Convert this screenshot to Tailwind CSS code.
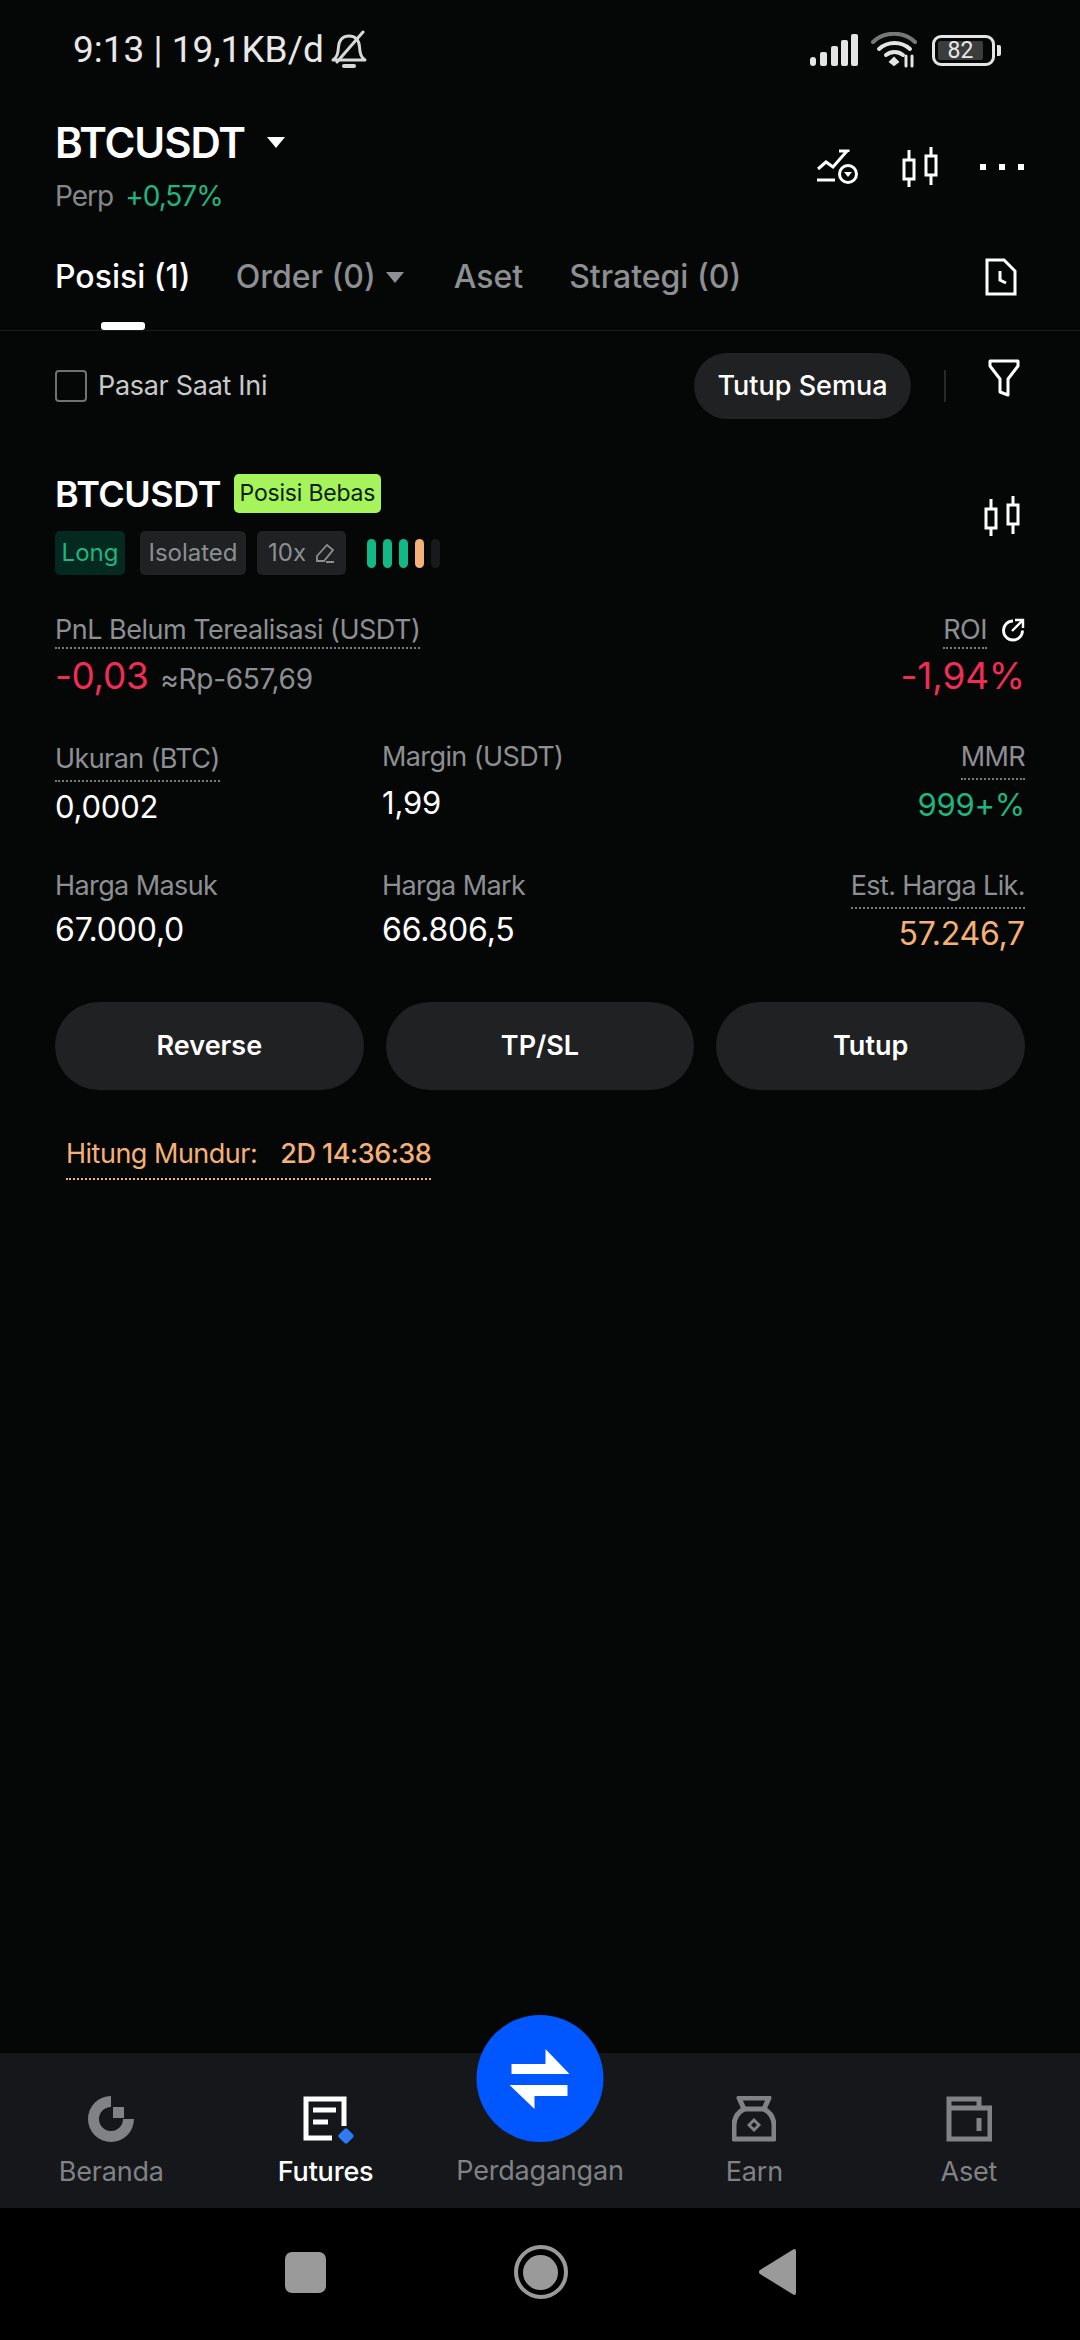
<!DOCTYPE html>
<html lang="en">
<head>
    <meta charset="UTF-8">
    <meta name="viewport" content="width=device-width, initial-scale=1.0">
    <title>Futures</title>
    <script src="https://cdn.jsdelivr.net/npm/@tailwindcss/browser@4"></script>
</head>
<body class="bg-[#050707]">
<div class="w-[1080px] h-[2340px] flex flex-col bg-[#050707] text-white overflow-hidden font-[family-name:Inter,sans-serif]">

    <!-- status bar -->
    <div class="h-[100px] shrink-0 flex items-center justify-between pl-[73px] pr-[79px]">
        <div class="flex items-center gap-[6px] text-[37px] text-[#e8e8e8] font-[family-name:Roboto,sans-serif]">
            <span>9:13 | 19,1KB/d</span>
            <svg class="w-[38px] h-[40px]" viewBox="0 0 38 40" fill="none" stroke="#d8d8d8" stroke-width="3">
                <path d="M3 30c4-3 5-6 5.500-13C9 10 13 6 19 6c6 0 10 4 10.500 11 .5 7 1.500 10 5.500 13z" stroke-linejoin="round"/>
                <path d="M14 36h10" stroke-linecap="round" stroke-width="4"/>
                <path d="M33 2L7 32" stroke-linecap="round"/>
            </svg>
        </div>
        <div class="flex items-center gap-[13px]">
            <svg class="w-[48px] h-[32px]" viewBox="0 0 48 32" fill="#e4e4e4">
                <rect x="0" y="23" width="6" height="9" rx="3"/>
                <rect x="10" y="18" width="7" height="14" rx="2"/>
                <rect x="21" y="12" width="7" height="20" rx="2"/>
                <rect x="31" y="6" width="7" height="26" rx="2"/>
                <rect x="41" y="0" width="7" height="32" rx="2"/>
            </svg>
            <svg class="w-[48px] h-[36px]" viewBox="0 0 48 36" fill="none" stroke-linecap="round">
                <path d="M2 10C13-1 33-1 44 10" stroke="#777" stroke-width="4"/>
                <path d="M8 17c9-8 22-8 31 0" stroke="#e4e4e4" stroke-width="4"/>
                <path d="M15 23c5-4 12-4 17 0" stroke="#e4e4e4" stroke-width="4"/>
                <path d="M19 30l4-4 4 4-4 3z" fill="#e4e4e4" stroke="#e4e4e4" stroke-width="2"/>
                <path d="M35 24v10M41 24v10" stroke="#e4e4e4" stroke-width="3"/>
            </svg>
            <div class="flex items-center gap-[2px]">
                <div class="w-[63px] h-[31px] rounded-[9px] border-[3px] border-[#e4e4e4] p-[3px] flex">
                    <div class="w-[45px] bg-[#3c3c3c] rounded-[2px] flex items-center justify-center text-[23px] leading-none text-[#e8e8e8] font-[family-name:Roboto,sans-serif]">82</div>
                </div>
                <div class="w-[4px] h-[11px] rounded-r-[2px] bg-[#e4e4e4]"></div>
            </div>
        </div>
    </div>

    <!-- symbol header -->
    <div class="h-[125px] shrink-0 flex items-start justify-between pl-[55px] pr-[56px]">
        <div>
            <div class="flex items-center h-[84px]">
                <span class="text-[42px] font-semibold tracking-[-1.1px]">BTCUSDT</span>
                <span class="ml-[22px] w-0 h-0 border-x-[9px] border-x-transparent border-t-[11px] border-t-white"></span>
            </div>
            <div class="flex items-center gap-[12px] -mt-[6px] text-[28px] leading-[36px] tracking-[-1px]">
                <span class="text-[#85878a]">Perp</span>
                <span class="text-[#1fb57f]">+0,57%</span>
            </div>
        </div>
        <div class="flex items-center h-[86px] mt-[24px]">
            <svg class="w-[42px] h-[36px]" viewBox="0 0 42 36" fill="none" stroke="white" stroke-width="3">
                <path d="M1 20l8-7 7 5L30 2M22 2h9v1"/>
                <path d="M0 31h18"/>
                <circle cx="31" cy="25" r="8.500"/>
                <path d="M27 23h8l-4 5z" fill="white" stroke="none"/>
            </svg>
            <svg class="ml-[43px] w-[36px] h-[40px]" viewBox="0 0 36 40" fill="none" stroke="white" stroke-width="3">
                <rect x="2" y="13" width="10" height="19"/>
                <path d="M7 3v10M7 32v8"/>
                <rect x="24" y="9" width="10" height="19"/>
                <path d="M29 0v9M29 28v10"/>
            </svg>
            <div class="ml-[42px] flex gap-[13px]">
                <div class="w-[6px] h-[6px] bg-white"></div>
                <div class="w-[6px] h-[6px] bg-white"></div>
                <div class="w-[6px] h-[6px] bg-white"></div>
            </div>
        </div>
    </div>

    <!-- tabs -->
    <div class="h-[106px] shrink-0 border-b border-[#1b1d1f] flex items-start pl-[55px] pr-[63px] text-[32px] text-[#8d8f92] font-medium">
        <div class="relative h-[105px] pt-[30px] leading-[44px] text-white">
            Posisi (1)
            <div class="absolute left-[46px] bottom-0 w-[44px] h-[8px] rounded-[3px] bg-white"></div>
        </div>
        <div class="ml-[45px] pt-[30px] leading-[44px] flex items-center gap-[10px]">
            <span>Order (0)</span>
            <span class="w-0 h-0 border-x-[9px] border-x-transparent border-t-[11px] border-t-[#8d8f92]"></span>
        </div>
        <div class="ml-[50px] pt-[30px] leading-[44px]">Aset</div>
        <div class="ml-[46px] pt-[30px] leading-[44px]">Strategi (0)</div>
        <svg class="ml-auto mt-[33px] w-[32px] h-[38px]" viewBox="0 0 32 38" fill="none" stroke="white" stroke-width="3">
            <path d="M2 2h17l11 11v23H2z"/>
            <path d="M15 13v9l6 3"/>
        </svg>
    </div>

    <!-- filter row -->
    <div class="h-[110px] shrink-0 flex items-center justify-between pl-[55px] pr-[60px]">
        <div class="flex items-center gap-[11px]">
            <div class="w-[32px] h-[32px] border-2 border-[#6f7174] rounded-[4px]"></div>
            <span class="text-[27px] tracking-[-0.3px] text-[#c8c9cb]">Pasar Saat Ini</span>
        </div>
        <div class="flex items-center">
            <div class="h-[66px] w-[217px] rounded-full bg-[#1f2122] flex items-center justify-center text-[27px] font-medium">Tutup Semua</div>
            <div class="ml-[33px] w-[2px] h-[32px] bg-[#26282a]"></div>
            <svg class="ml-[42px] -mt-[16px] w-[32px] h-[38px]" viewBox="0 0 32 38" fill="none" stroke="white" stroke-width="3" stroke-linejoin="round">
                <path d="M2 2h28v5L20 20v16l-8-3V20L2 7z"/>
            </svg>
        </div>
    </div>

    <!-- position card -->
    <div class="px-[55px] pt-[33px]">
        <div class="flex justify-between items-center">
            <div>
                <div class="flex items-center gap-[13px] h-[39px]">
                    <span class="text-[36px] font-semibold tracking-[-0.5px]">BTCUSDT</span>
                    <span class="h-[39px] w-[147px] rounded-[5px] bg-[#a6f45c] text-[#0c1f08] text-[23px] tracking-[-0.2px] flex items-center justify-center">Posisi Bebas</span>
                </div>
                <div class="flex items-center mt-[18px] h-[44px] text-[24px]">
                    <span class="h-[44px] w-[70px] rounded-[5px] bg-[#04291f] text-[#1fb57f] flex items-center justify-center">Long</span>
                    <span class="ml-[15px] h-[44px] w-[106px] rounded-[5px] bg-[#1f2122] text-[#8d8f92] flex items-center justify-center">Isolated</span>
                    <span class="ml-[11px] h-[44px] w-[89px] rounded-[5px] bg-[#1f2122] text-[#8d8f92] flex items-center justify-center gap-[9px]">
                        10x
                        <svg class="w-[20px] h-[20px]" viewBox="0 0 20 20" fill="none" stroke="#8d8f92" stroke-width="1.800"><path d="M2 13L12 2l6 5-9 11H2zM11 19h8"/></svg>
                    </span>
                    <div class="ml-[21px] flex gap-[7px]">
                        <div class="w-[9px] h-[29px] rounded-full bg-[#12b886]"></div>
                        <div class="w-[9px] h-[29px] rounded-full bg-[#12b886]"></div>
                        <div class="w-[9px] h-[29px] rounded-full bg-[#12b886]"></div>
                        <div class="w-[9px] h-[29px] rounded-full bg-[#f5b078]"></div>
                        <div class="w-[9px] h-[29px] rounded-full bg-[#17191b]"></div>
                    </div>
                </div>
            </div>
            <svg class="w-[36px] h-[40px] mr-[5px] mb-[18px]" viewBox="0 0 36 40" fill="none" stroke="white" stroke-width="3">
                <rect x="2" y="13" width="10" height="19"/>
                <path d="M7 3v10M7 32v8"/>
                <rect x="24" y="9" width="10" height="19"/>
                <path d="M29 0v9M29 28v10"/>
            </svg>
        </div>

        <!-- pnl -->
        <div class="flex justify-between mt-[38px]">
            <div>
                <div class="inline-block text-[27px] leading-[34px] tracking-[-0.5px] text-[#8d8f92] border-b-2 border-dotted border-[#77797c]">PnL Belum Terealisasi (USDT)</div>
                <div class="flex items-baseline gap-[12px] h-[46px] leading-[46px] mt-[4px]">
                    <span class="text-[37px] tracking-[-0.4px] text-[#f02d55]">-0,03</span>
                    <span class="text-[28px] tracking-[-0.3px] text-[#8d8f92]">≈Rp-657,69</span>
                </div>
            </div>
            <div class="flex flex-col items-end">
                <div class="flex items-start gap-[14px]">
                    <span class="text-[27px] leading-[34px] tracking-[-0.5px] text-[#8d8f92] border-b-2 border-dotted border-[#77797c]">ROI</span>
                    <svg class="w-[24px] h-[24px] mt-[5px]" viewBox="0 0 24 24" fill="none" stroke="white" stroke-width="2.800">
                        <path d="M12 3a9.500 9.500 0 1 0 9.500 9.500"/>
                        <path d="M11 13L21 3M14 2h8v8" stroke-width="2.400"/>
                    </svg>
                </div>
                <div class="text-[37px] h-[46px] leading-[46px] mt-[4px] tracking-[-0.2px] text-[#f02d55]">-1,94%</div>
            </div>
        </div>

        <!-- stats -->
        <div class="grid grid-cols-[327px_1fr_auto] mt-[40px] text-[27px] tracking-[-0.6px]">
            <div>
                <div class="inline-block leading-[36px] pb-[3px] text-[#8d8f92] border-b-2 border-dotted border-[#77797c]">Ukuran (BTC)</div>
                <div class="text-[31px] tracking-[-0.2px] leading-[40px] mt-[5px]">0,0002</div>
            </div>
            <div>
                <div class="leading-[36px] text-[#8d8f92]">Margin (USDT)</div>
                <div class="text-[31px] tracking-[-0.2px] leading-[40px] mt-[8px]">1,99</div>
            </div>
            <div class="flex flex-col items-end">
                <div class="leading-[36px] pb-[3px] text-[#8d8f92] border-b-2 border-dotted border-[#77797c]">MMR</div>
                <div class="text-[31px] tracking-[-0.2px] leading-[40px] mt-[5px] text-[#1fb57f]">999+%</div>
            </div>
            <div class="mt-[41px]">
                <div class="leading-[36px] text-[#8d8f92]">Harga Masuk</div>
                <div class="text-[32px] tracking-[-0.2px] leading-[40px] mt-[6px]">67.000,0</div>
            </div>
            <div class="mt-[41px]">
                <div class="leading-[36px] text-[#8d8f92]">Harga Mark</div>
                <div class="text-[32px] tracking-[-0.2px] leading-[40px] mt-[6px]">66.806,5</div>
            </div>
            <div class="mt-[41px] flex flex-col items-end">
                <div class="leading-[36px] pb-[3px] text-[#8d8f92] border-b-2 border-dotted border-[#77797c]">Est. Harga Lik.</div>
                <div class="text-[32px] tracking-[-0.2px] leading-[40px] mt-[5px] text-[#f5b078]">57.246,7</div>
            </div>
        </div>

        <!-- actions -->
        <div class="grid grid-cols-3 gap-[22px] mt-[48px] text-[27px] font-semibold">
            <div class="h-[88px] rounded-full bg-[#1f2122] flex items-center justify-center">Reverse</div>
            <div class="h-[88px] rounded-full bg-[#1f2122] flex items-center justify-center">TP/SL</div>
            <div class="h-[88px] rounded-full bg-[#1f2122] flex items-center justify-center">Tutup</div>
        </div>

        <!-- countdown -->
        <div class="inline-flex mt-[43px] ml-[11px] gap-[23px] text-[27px] leading-[42px] pb-[3px] tracking-[-0.5px] text-[#f5b078] border-b-2 border-dotted border-[#f5b078]">
            <span>Hitung Mundur:</span>
            <span class="font-medium">2D 14:36:38</span>
        </div>
    </div>

    <!-- bottom nav -->
    <div class="mt-auto h-[155px] shrink-0 bg-[#15171a] grid grid-cols-5 px-[4px] text-[27px] tracking-[-0.2px] text-[#808285]">
        <div class="flex flex-col items-center pt-[43px]">
            <svg class="w-[46px] h-[46px]" viewBox="0 0 46 46" fill="#808285">
                <path d="M23 0v11a12 12 0 1 0 12 12h11A23 23 0 1 1 23 0z"/>
                <rect x="25" y="11" width="11" height="11"/>
            </svg>
            <span class="mt-[12px] leading-[36px]">Beranda</span>
        </div>
        <div class="flex flex-col items-center pt-[43px] text-white font-medium">
            <div class="relative w-[46px] h-[46px]">
                <svg class="w-[46px] h-[46px]" viewBox="0 0 46 46" fill="none" stroke="white" stroke-width="5">
                    <path d="M29 42H3V3h38v27"/>
                    <path d="M10 14h23M10 26h15" stroke-width="5"/>
                </svg>
                <div class="absolute right-[-3px] bottom-[0px] w-[12px] h-[12px] rotate-45 rounded-[2px] bg-[#2f7bf6]"></div>
            </div>
            <span class="mt-[12px] leading-[36px]">Futures</span>
        </div>
        <div class="relative flex flex-col items-center justify-end pb-[19px]">
            <div class="absolute left-1/2 -translate-x-1/2 -top-[38px] w-[127px] h-[127px] rounded-full bg-[#0056ff] flex items-center justify-center">
                <svg class="w-[60px] h-[60px]" viewBox="0 0 60 60" fill="white">
                    <path d="M36 0l24 25H2V15h34z"/>
                    <path d="M0 36h58v11H25v13z"/>
                </svg>
            </div>
            <span class="leading-[36px]">Perdagangan</span>
        </div>
        <div class="flex flex-col items-center pt-[43px]">
            <svg class="w-[44px] h-[46px]" viewBox="0 0 44 46" fill="none" stroke="#808285" stroke-width="5" stroke-linejoin="round">
                <path d="M7 2h30l-5 11a19 19 0 0 1 10 16v14H2V29a19 19 0 0 1 10-16z"/>
                <path d="M12 13h20"/>
                <path d="M22 22l7 7-7 7-7-7z" stroke="none" fill="#808285"/>
                <path d="M22 26l3 3-3 3-3-3z" stroke="none" fill="#15171a"/>
            </svg>
            <span class="mt-[12px] leading-[36px]">Earn</span>
        </div>
        <div class="flex flex-col items-center pt-[43px]">
            <svg class="w-[46px] h-[46px]" viewBox="0 0 46 46" fill="none" stroke="#808285" stroke-width="5">
                <path d="M3 43V3h30v9M3 12h41v31H3z"/>
                <path d="M33 22v13"/>
            </svg>
            <span class="mt-[12px] leading-[36px]">Aset</span>
        </div>
    </div>

    <!-- system nav -->
    <div class="h-[132px] shrink-0 bg-black flex items-center justify-center pb-[4px]">
        <div class="w-[41px] h-[41px] rounded-[7px] bg-[#9a9a9a]"></div>
        <div class="ml-[188px] w-[54px] h-[54px] rounded-full border-[4px] border-[#9a9a9a] flex items-center justify-center">
            <div class="w-[35px] h-[35px] rounded-full bg-[#9a9a9a]"></div>
        </div>
        <svg class="ml-[190px] w-[38px] h-[48px]" viewBox="0 0 38 48" fill="#9a9a9a"><path d="M36 1a2 2 0 0 1 2 2v42a2 2 0 0 1-2 2L2 26a2.500 2.500 0 0 1 0-4z"/></svg>
    </div>
</div>
</body>
</html>
